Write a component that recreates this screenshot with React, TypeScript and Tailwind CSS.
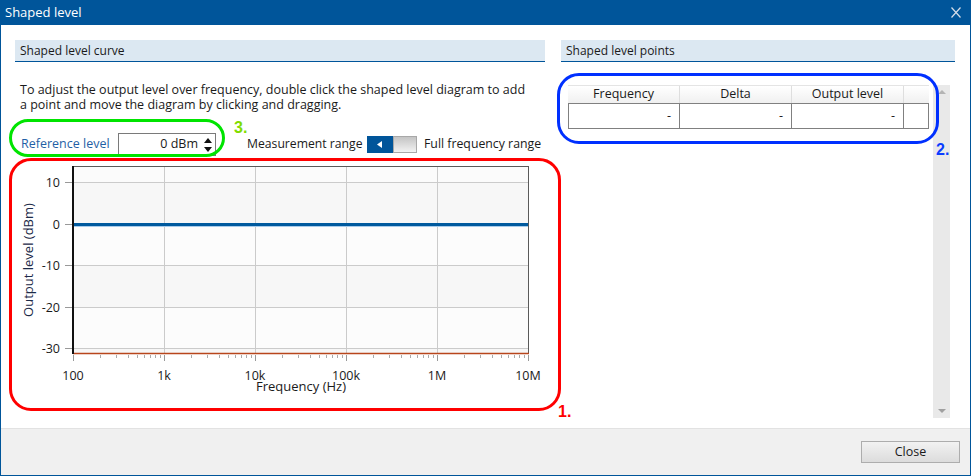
import React from "react";

const DEC = 91;
const X0 = 73;
const xLabels = ["100", "1k", "10k", "100k", "1M", "10M"];
const yTicks: [string, number][] = [
  ["10", 182],
  ["0", 224],
  ["-10", 265],
  ["-20", 307],
  ["-30", 348],
];

function Chart() {
  const minor: number[] = [];
  for (let d = 0; d < 5; d++) {
    for (let k = 2; k <= 9; k++) minor.push(X0 + (d + Math.log10(k)) * DEC);
  }
  const bands = [
    [166, 182, "#fbfbfb"],
    [182, 224, "#f7f7f7"],
    [224, 265, "#fcfcfc"],
    [265, 307, "#f7f7f7"],
    [307, 348, "#fcfcfc"],
    [348, 353, "#f7f7f7"],
  ] as [number, number, string][];
  return (
    <svg width={530} height={240} className="block">
      <g transform="translate(-15,-160)" fontFamily="'Open Sans', 'Noto Sans', sans-serif">
        {bands.map(([a, b, c], i) => (
          <rect key={i} x={X0} y={a} width={528 - X0} height={b - a} fill={c} />
        ))}
        {yTicks.map(([, y]) => (
          <line key={"h" + y} x1={X0} x2={528} y1={y + 0.5} y2={y + 0.5} stroke="#cbcbcb" strokeWidth={1} />
        ))}
        {[1, 2, 3, 4].map((i) => (
          <line key={"v" + i} x1={X0 + i * DEC + 0.5} x2={X0 + i * DEC + 0.5} y1={166} y2={353} stroke="#cbcbcb" strokeWidth={1} />
        ))}
        <line x1={X0} x2={528.5} y1={166.5} y2={166.5} stroke="#5a5a5a" strokeWidth={1} />
        <line x1={528.5} x2={528.5} y1={166} y2={353} stroke="#5a5a5a" strokeWidth={1} />
        {yTicks.map(([l, y]) => (
          <g key={"t" + l}>
            <line x1={65} x2={73} y1={y + 0.5} y2={y + 0.5} stroke="#999" strokeWidth={1} />
            <text x={60} y={y + 4.5} textAnchor="end" fontSize={12.5} fill="#1a1a1a">
              {l}
            </text>
          </g>
        ))}
        <line x1={X0} x2={528} y1={226.5} y2={226.5} stroke="#a8cbea" strokeWidth={1} />
        <line x1={X0} x2={528} y1={224.5} y2={224.5} stroke="#005a9e" strokeWidth={3} />
        <line x1={X0} x2={529} y1={353.5} y2={353.5} stroke="#b8461c" strokeWidth={1.5} />
        {minor.map((x, i) => (
          <line key={"m" + i} x1={Math.round(x) + 0.5} x2={Math.round(x) + 0.5} y1={355} y2={358} stroke="#aaa" strokeWidth={1} />
        ))}
        {xLabels.map((l, i) => (
          <g key={l}>
            <line x1={X0 + i * DEC + 0.5} x2={X0 + i * DEC + 0.5} y1={355} y2={361} stroke="#999" strokeWidth={1} />
            <text x={X0 + i * DEC} y={380} textAnchor="middle" fontSize={12.5} fill="#1a1a1a">
              {l}
            </text>
          </g>
        ))}
        <line x1={73} x2={73} y1={166} y2={354} stroke="#111" strokeWidth={2} />
        <text x={301} y={391} textAnchor="middle" fontSize={13} fill="#1a1a1a">
          Frequency (Hz)
        </text>
        <text x={0} y={0} transform="translate(33,260) rotate(-90)" textAnchor="middle" fontSize={13} fill="#1c2a48">
          Output level (dBm)
        </text>
      </g>
    </svg>
  );
}

export default function App() {
  return (
    <div className="relative w-[971px] h-[476px] bg-white border-x border-b border-[#00559a] flex flex-col font-['Open_Sans','Noto_Sans',sans-serif] text-[12px] text-[#1a1a1a] overflow-hidden">
      <div className="h-[25px] shrink-0 bg-[#00559a] -mx-px flex items-center justify-between pl-[5px] pr-[10px] text-white text-[13px]">
        <span>Shaped level</span>
        <svg width="10" height="11" viewBox="0 0 10 11">
          <path d="M0.5 0.5 L9.5 10.5 M9.5 0.5 L0.5 10.5" stroke="#d4dde8" strokeWidth="1.2" fill="none" />
        </svg>
      </div>

      <div className="flex-1 flex pt-[15px]">
        <div className="ml-[14px] w-[530px] flex flex-col">
          <div className="h-[22px] bg-[#dce8f2] border-b border-[#00559a] pl-[5px] flex items-center">Shaped level curve</div>
          <div className="mt-[20px] pl-[5px] leading-[15px] text-[12.5px] whitespace-nowrap">
            To adjust the output level over frequency, double click the shaped level diagram to add
            <br />a point and move the diagram by clicking and dragging.
          </div>
          <div className="mt-[21px] h-[23px] flex items-center">
            <span className="w-[103px] pl-[6px] text-[#1f5fa6] text-[12.5px]">Reference level</span>
            <div className="w-[98px] h-[23px] border border-[#7a7a7a] flex items-center justify-end pr-[3px] bg-white text-[12.5px]">
              <span>0 dBm</span>
              <div className="ml-[6px] flex flex-col gap-[4px] items-center">
                <svg width="8" height="5" viewBox="0 0 8 5">
                  <path d="M0 5 L4 0 L8 5 Z" fill="#111" />
                </svg>
                <svg width="8" height="5" viewBox="0 0 8 5">
                  <path d="M0 0 L8 0 L4 5 Z" fill="#111" />
                </svg>
              </div>
            </div>
            <span className="ml-[31px] w-[120px] whitespace-nowrap text-[12.2px]">Measurement range</span>
            <div className="w-[50px] h-[17px] flex">
              <div className="w-[26px] h-full bg-[#00559a] flex items-center justify-center pr-[2px]">
                <svg width="5" height="7" viewBox="0 0 5 7">
                  <path d="M5 0 L0 3.5 L5 7 Z" fill="#fff" />
                </svg>
              </div>
              <div className="flex-1 h-full border border-[#a8a8a8] bg-gradient-to-b from-[#c4c4c4] to-[#f2f2f2]" />
            </div>
            <span className="ml-[7px] whitespace-nowrap text-[12.3px]">Full frequency range</span>
          </div>
          <div className="mt-[4px]">
            <Chart />
          </div>
        </div>

        <div className="ml-[16px] w-[394px] flex flex-col">
          <div className="h-[22px] bg-[#dce8f2] border-b border-[#00559a] pl-[5px] flex items-center">Shaped level points</div>
          <div className="mt-[23px] flex pl-[7px] pr-[5px] gap-[4px]">
            <div className="w-[361px] self-start text-[12.5px]">
              <div className="flex h-[18px] bg-gradient-to-b from-white to-[#f0f0f0] border-t border-[#e4e4e4]">
                <div className="w-[112px] border-r border-[#dedede] flex items-center justify-center">Frequency</div>
                <div className="w-[112px] border-r border-[#dedede] flex items-center justify-center">Delta</div>
                <div className="w-[112px] border-r border-[#dedede] flex items-center justify-center">Output level</div>
                <div className="flex-1" />
              </div>
              <div className="flex h-[26px] border border-[#808080] bg-white">
                <div className="w-[111px] border-r border-[#808080] flex items-center justify-end pr-[8px]">-</div>
                <div className="w-[112px] border-r border-[#808080] flex items-center justify-end pr-[8px]">-</div>
                <div className="w-[112px] border-r border-[#808080] flex items-center justify-end pr-[8px]">-</div>
                <div className="flex-1" />
              </div>
            </div>
            <div className="w-[17px] h-[333px] bg-[#e9e9e9] flex flex-col items-center justify-between py-[5px]">
              <svg width="8" height="4" viewBox="0 0 8 4">
                <path d="M0 4 L4 0 L8 4 Z" fill="#b4b4b4" />
              </svg>
              <svg width="8" height="4" viewBox="0 0 8 4">
                <path d="M0 0 L8 0 L4 4 Z" fill="#a0a0a0" />
              </svg>
            </div>
          </div>
        </div>
      </div>

      <div className="h-[47px] shrink-0 bg-[#f0f0f0] border-t border-[#e2e2e2] flex justify-end items-start pt-[12px] pr-[10px]">
        <button className="w-[99px] h-[22px] border border-[#adadad] bg-gradient-to-b from-[#f2f2f2] to-[#dcdcdc] text-[12.5px] text-[#1a1a1a] flex items-center justify-center">
          Close
        </button>
      </div>

      <div className="absolute left-[8px] top-[119px] w-[216px] h-[38px] rounded-[19px] border-[3px] border-[#00e400]" />
      <div className="absolute left-[233px] top-[116px] text-[16px] font-bold text-[#7fdc00] font-['Liberation_Sans',sans-serif]">3.</div>
      <div className="absolute left-[8px] top-[158px] w-[552px] h-[253px] rounded-[22px] border-[3px] border-[#ff0000]" />
      <div className="absolute left-[557px] top-[400px] text-[16px] font-bold text-[#ff0000] font-['Liberation_Sans',sans-serif]">1.</div>
      <div className="absolute left-[556px] top-[73px] w-[382px] h-[71px] rounded-[22px] border-[3px] border-[#0030ff]" />
      <div className="absolute left-[935px] top-[138px] text-[16px] font-bold text-[#0a3cff] font-['Liberation_Sans',sans-serif]">2.</div>
    </div>
  );
}
